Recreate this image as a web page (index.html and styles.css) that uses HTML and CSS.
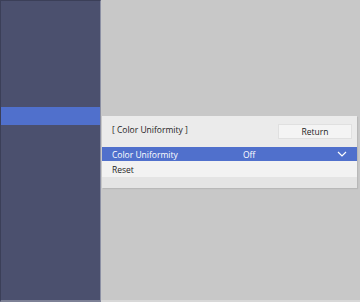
FILE: index.html
```html
<!DOCTYPE html>
<html lang="en">
<head>
    <meta charset="UTF-8">
    <meta name="viewport" content="width=device-width, initial-scale=1.0">
    <title>Color Uniformity</title>
    <link rel="stylesheet" href="styles.css">
</head>
<body>
    <div class="screen">
        <div class="sidebar">
            <div class="side-item active"></div>
        </div>
        <div class="main">
            <div class="panel">
                <div class="panel-head">
                    <span class="panel-title">[ Color Uniformity ]</span>
                    <button class="return-btn">Return</button>
                </div>
                <div class="row selected">
                    <span class="row-label">Color Uniformity</span>
                    <span class="row-value">Off</span>
                    <svg class="chevron" width="10" height="6" viewBox="0 0 10 6">
                        <polyline points="1,1 5,5 9,1" fill="none" stroke="#fff" stroke-width="1.2"/>
                    </svg>
                </div>
                <div class="row">
                    <span class="row-label">Reset</span>
                </div>
                <div class="panel-foot"></div>
            </div>
        </div>
    </div>
</body>
</html>
```

FILE: styles.css
```css
body {
    margin: 0;
    font-family: "Open Sans", "Noto Sans", sans-serif;
    background: #c8c8c8;
}
.screen {
    display: grid;
    grid-template-columns: 101px 1fr;
    width: 360px;
    height: 302px;
    overflow: hidden;
}
.sidebar {
    background: #4b506e;
    border-left: 1px solid #3b3f58;
    border-top: 1px solid #3b3f58;
    border-right: 1px solid #8c90a4;
    border-bottom: 2px solid #7d8196;
    padding-top: 106px;
}
.side-item {
    height: 18px;
}
.side-item.active {
    background: #5070cc;
}
.main {
    background: #c8c8c8;
    padding: 116px 3px 0 1px;
    border-bottom: 2px solid #d8d8d8;
}
.panel {
    background: #ebebeb;
    box-shadow: 1px 1px 1px rgba(0,0,0,0.08);
}
.panel-head {
    display: flex;
    align-items: center;
    justify-content: space-between;
    height: 25px;
    padding: 0 5px 6px 10px;
}
.panel-title {
    font-size: 8.5px;
    color: #1e1e1e;
    margin-top: 1px;
}
.return-btn {
    width: 74px;
    height: 15px;
    margin-top: 5px;
    padding: 0;
    background: #f4f4f4;
    border: 1px solid #e0e0e0;
    font-family: inherit;
    font-size: 8.5px;
    color: #1e1e1e;
}
.row {
    display: flex;
    align-items: center;
    height: 16px;
    padding-left: 10px;
    background: #f2f2f2;
    font-size: 8.5px;
    color: #1e1e1e;
}
.row.selected {
    height: 14px;
    background: #5070cc;
    color: #fff;
}
.row-label {
    width: 131px;
}
.row-value {
    flex: 1;
}
.chevron {
    margin-right: 10px;
}
.panel-foot {
    height: 11px;
    background: #e4e4e4;
}
```
